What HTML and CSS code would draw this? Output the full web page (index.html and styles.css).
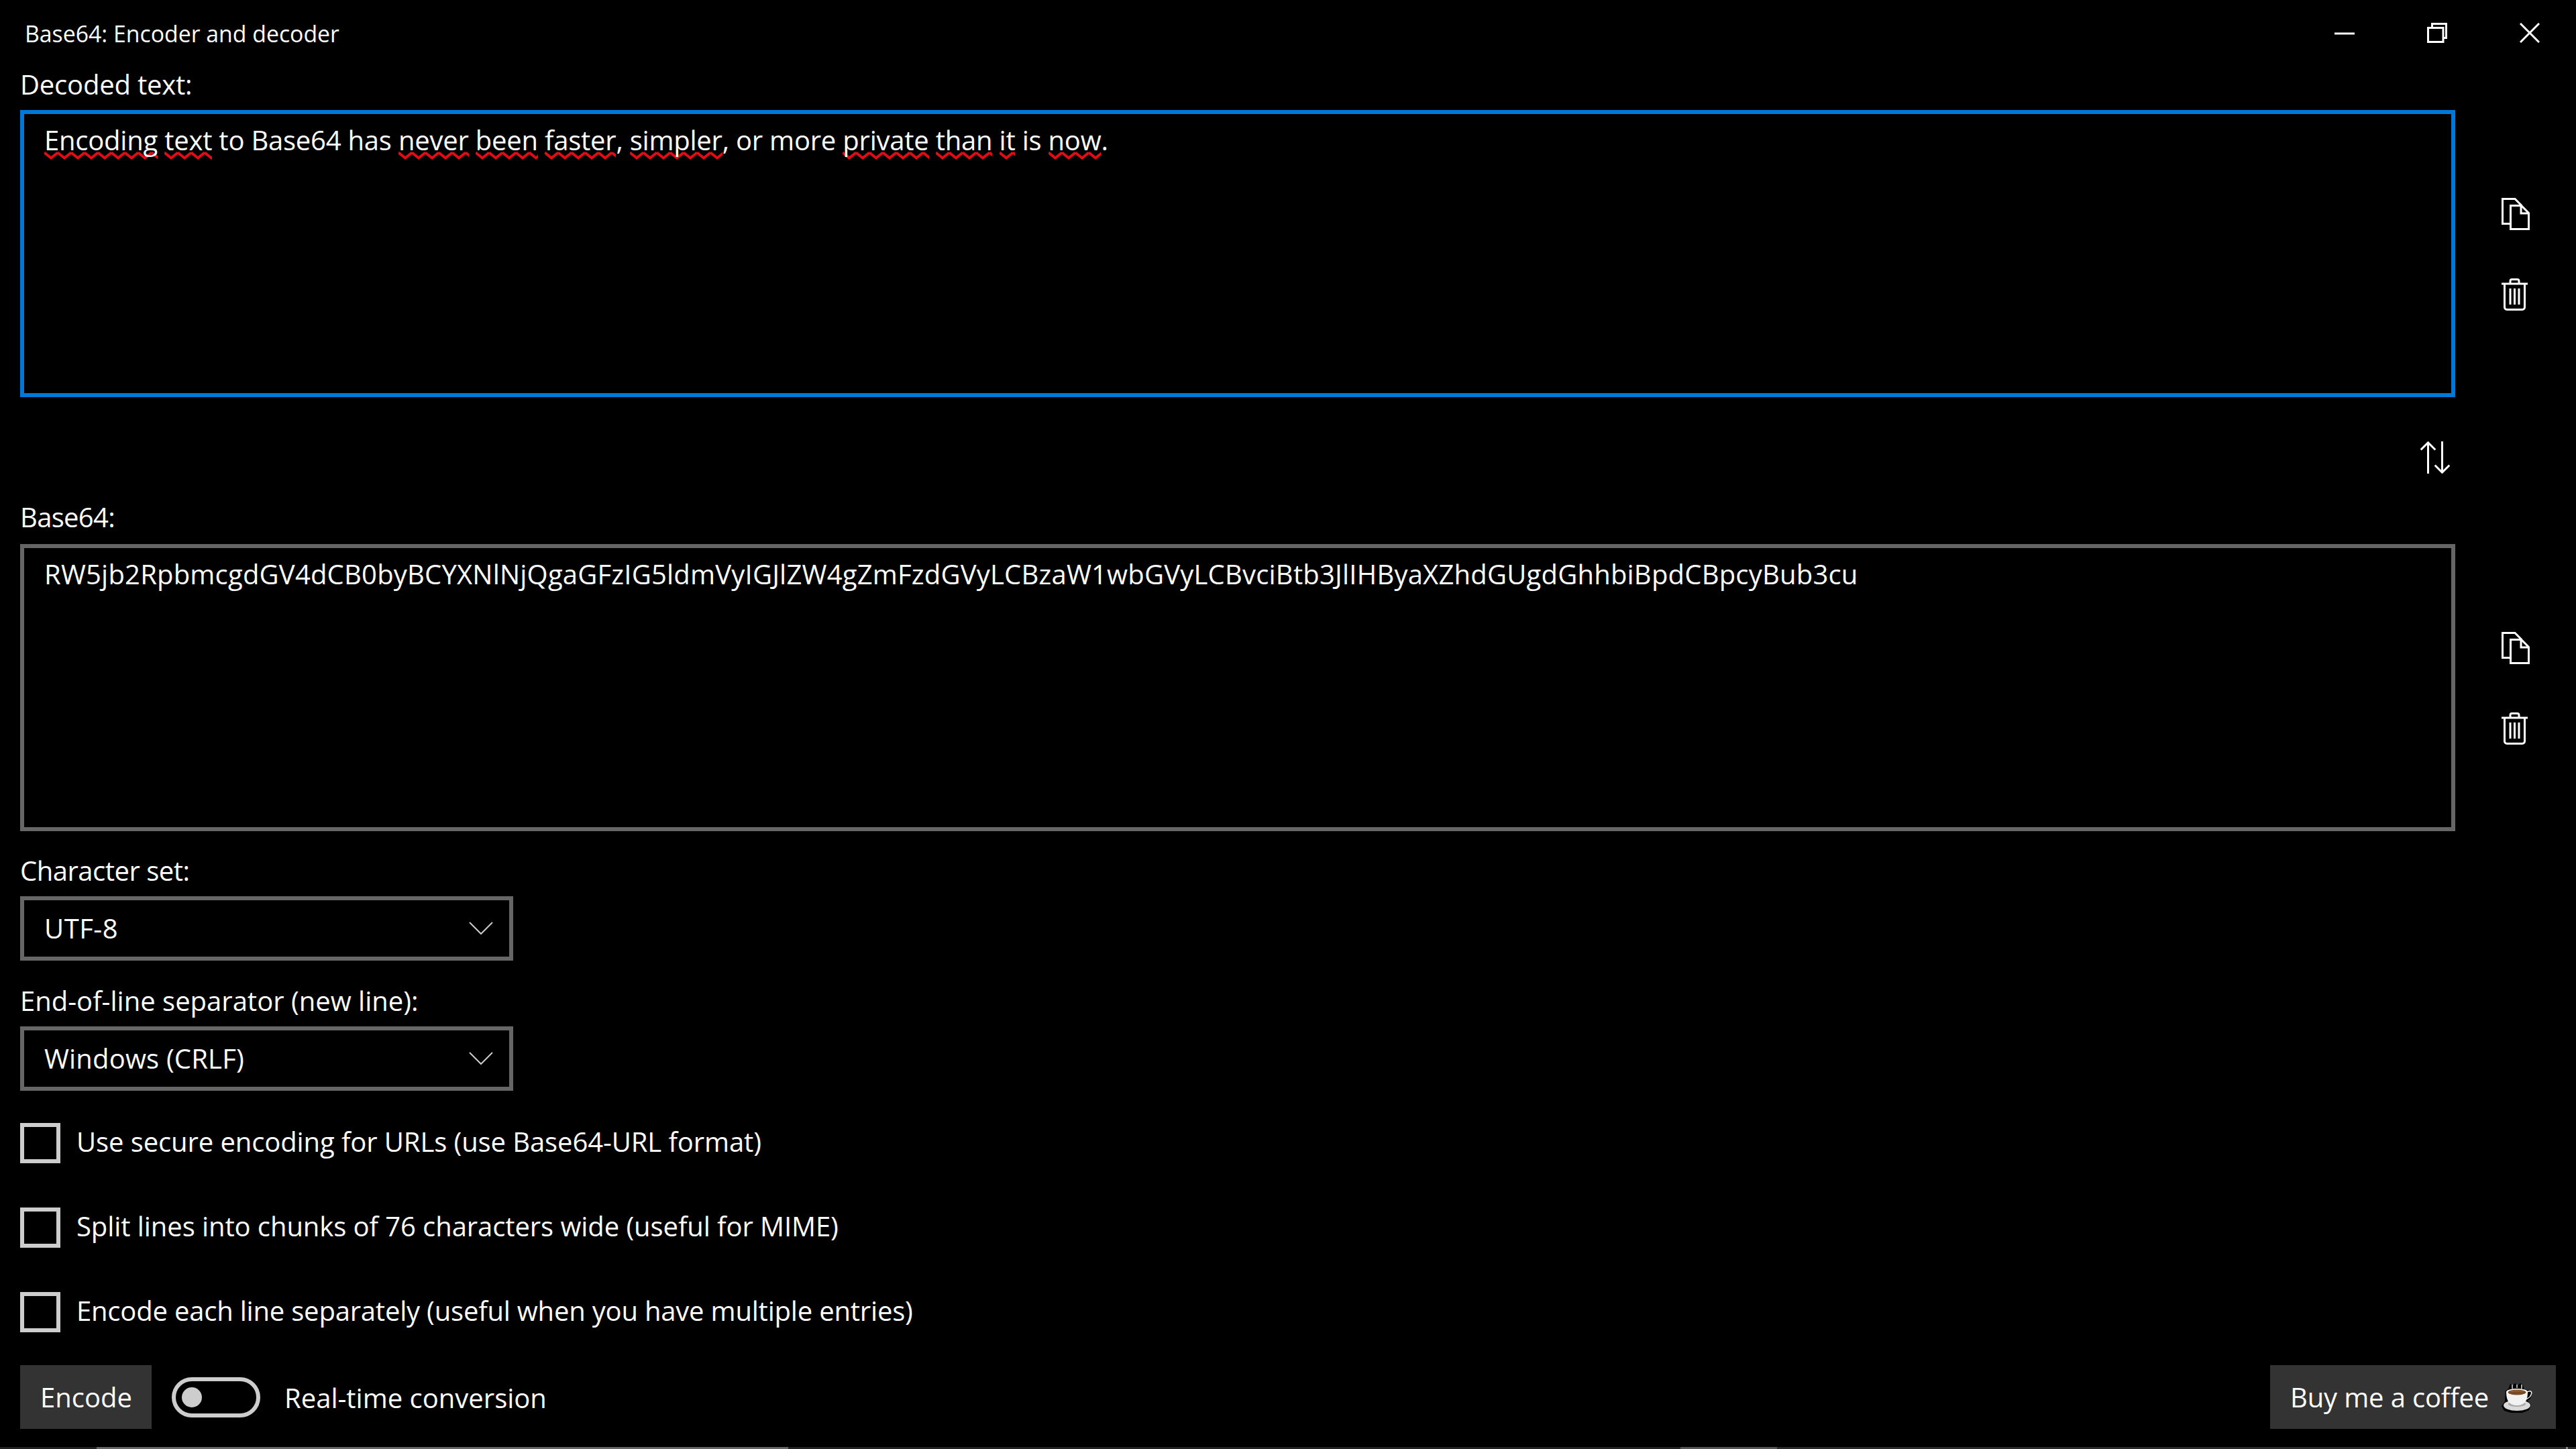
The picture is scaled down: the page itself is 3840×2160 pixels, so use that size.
FILE: index.html
```html
<!DOCTYPE html>
<html lang="en">
<head>
<meta charset="utf-8">
<title>Base64: Encoder and decoder</title>
<link rel="stylesheet" href="styles.css">
</head>
<body>
<div class="app">
  <header class="titlebar">
    <span class="title">Base64: Encoder and decoder</span>
    <div class="winctl">
      <svg class="wi wi-min" width="30" height="30" viewBox="0 0 30 30"><path d="M0 16h30" stroke="#fff" stroke-width="3" fill="none"/></svg>
      <svg class="wi wi-max" width="30" height="30" viewBox="0 0 30 30"><path d="M1.500 7.500h22.500v21h-22.500zM7.500 7.500v-6h21v21h-4.500" stroke="#fff" stroke-width="3" fill="none"/></svg>
      <svg class="wi wi-close" width="30" height="30" viewBox="0 0 30 30"><path d="M1 1l28 28M29 1L1 29" stroke="#fff" stroke-width="3" fill="none"/></svg>
    </div>
  </header>

  <main class="content">
    <div class="label lbl-decoded">Decoded text:</div>
    <div class="field-row">
      <div class="box box-focus">
        <div class="box-text t-decoded"><span class="sp">Encoding</span> <span class="sp">text</span> to Base64 has <span class="sp">never</span> <span class="sp">been</span> <span class="sp">faster</span>, <span class="sp">simpler</span>, or more <span class="sp">private</span> <span class="sp">than</span> <span class="sp">it</span> is <span class="sp">now</span>.</div>
      </div>
      <div class="side">
        <svg class="ic-copy" width="42" height="48" viewBox="0 0 42 48"><g stroke="#fff" stroke-width="3" fill="none"><path d="M12 38.500H1.500V1.500H20l10 10"/><path d="M13.500 11.500h16l11 11v24h-27zM29 12v11h11.500"/></g></svg>
        <svg class="ic-trash" width="39" height="48" viewBox="0 0 39 48"><g stroke="#fff" stroke-width="3" fill="none"><path d="M0 8h39M4.500 8v35c0 2 1.500 3.500 3.500 3.500h23c2 0 3.500-1.500 3.500-3.500V8M13 8V4c0-1.500 1-2.500 2.500-2.500h8C25 1.500 26 2.500 26 4v4M13 15v24M19.500 15v24M26 15v24"/></g></svg>
      </div>
    </div>

    <div class="swap-row">
      <svg class="ic-swap" width="44" height="48" viewBox="0 0 44 48"><g stroke="#fff" stroke-width="3" fill="none"><path d="M11.500 48V1.500M0.700 12.500L11.500 1.700L22.300 12.500"/><path d="M32.500 0V46.500M21.700 35.500L32.500 46.300L43.300 35.500"/></g></svg>
    </div>

    <div class="label lbl-base">Base64:</div>
    <div class="field-row">
      <div class="box box-plain">
        <div class="box-text t-base">RW5jb2RpbmcgdGV4dCB0byBCYXNlNjQgaGFzIG5ldmVyIGJlZW4gZmFzdGVyLCBzaW1wbGVyLCBvciBtb3JlIHByaXZhdGUgdGhhbiBpdCBpcyBub3cu</div>
      </div>
      <div class="side">
        <svg class="ic-copy" width="42" height="48" viewBox="0 0 42 48"><g stroke="#fff" stroke-width="3" fill="none"><path d="M12 38.500H1.500V1.500H20l10 10"/><path d="M13.500 11.500h16l11 11v24h-27zM29 12v11h11.500"/></g></svg>
        <svg class="ic-trash" width="39" height="48" viewBox="0 0 39 48"><g stroke="#fff" stroke-width="3" fill="none"><path d="M0 8h39M4.500 8v35c0 2 1.500 3.500 3.500 3.500h23c2 0 3.500-1.500 3.500-3.500V8M13 8V4c0-1.500 1-2.500 2.500-2.500h8C25 1.500 26 2.500 26 4v4M13 15v24M19.500 15v24M26 15v24"/></g></svg>
      </div>
    </div>

    <div class="label lbl-charset">Character set:</div>
    <div class="select">
      <span class="sel-utf">UTF-8</span>
      <svg width="36" height="20" viewBox="0 0 36 20"><path d="M1 1l17 17L35 1" stroke="#ccc" stroke-width="2" fill="none"/></svg>
    </div>

    <div class="label lbl-eol">End-of-line separator (new line):</div>
    <div class="select">
      <span class="sel-win">Windows (CRLF)</span>
      <svg width="36" height="20" viewBox="0 0 36 20"><path d="M1 1l17 17L35 1" stroke="#ccc" stroke-width="2" fill="none"/></svg>
    </div>

    <div class="checks">
      <div class="check"><span class="cb"></span><span class="ck-text c1">Use secure encoding for URLs (use Base64-URL format)</span></div>
      <div class="check"><span class="cb"></span><span class="ck-text c2">Split lines into chunks of 76 characters wide (useful for MIME)</span></div>
      <div class="check"><span class="cb"></span><span class="ck-text c3">Encode each line separately (useful when you have multiple entries)</span></div>
    </div>

    <div class="actions">
      <div class="btn btn-encode">Encode</div>
      <div class="toggle"><span class="thumb"></span></div>
      <span class="toggle-label">Real-time conversion</span>
      <div class="btn btn-coffee">
        <span class="coffee-text">Buy me a coffee</span>
        <svg class="coffee" width="48" height="46" viewBox="0 0 48 46">
          <path d="M14 3l4 2 3-3 4 3 4-3 4 3 2 8 6-1 5 4-2 9-4 3 5 6-3 8-10 4H15L5 43 1 36l5-7 1-16 4-2z" fill="#000"/>
          <ellipse cx="24" cy="35" rx="20" ry="8" fill="#d9d9d9"/>
          <ellipse cx="24" cy="33" rx="13" ry="4" fill="#aaa"/>
          <path d="M8 15c0 14 5 20 16 20s16-6 16-20z" fill="#f2f2f2"/>
          <ellipse cx="24" cy="15" rx="16" ry="5" fill="#fff"/>
          <ellipse cx="24" cy="15.500" rx="13.500" ry="4" fill="#7a4a22"/>
          <path d="M11.500 15.500c3-2 22-2 25 0-3-3-22-3-25 0z" fill="#b7834f"/>
          <path d="M39 15c6-3 8 0 6 4-1 3-5 6-8 7" stroke="#eee" stroke-width="1.500" fill="none"/>
          <path d="M17 4v6M24 4v5M31 4v6" stroke="#ddd" stroke-width="1.500" fill="none"/>
        </svg>
      </div>
    </div>
  </main>

  <footer class="strip">
    <span class="seg s1"></span><span class="seg s2"></span><span class="seg s3"></span><span class="seg s4"></span><span class="seg s5"></span><span class="seg s6"></span><span class="seg s7"></span>
  </footer>
</div>
</body>
</html>
```

FILE: styles.css
```css
* { box-sizing: border-box; }
html, body { margin: 0; padding: 0; background: #000; }
body { font-family: "Open Sans", "Noto Sans", sans-serif; color: #fff; font-size: 40px; font-weight: 400; }
.app { width: 3840px; height: 2160px; display: flex; flex-direction: column; overflow: hidden; }

.titlebar { height: 96px; flex: none; display: flex; align-items: center; justify-content: space-between; padding: 0 54px 0 37px; }
.title { font-size: 33.8px; line-height: 40px; margin-top: 4px; white-space: nowrap; }
.winctl { display: flex; gap: 108px; margin-top: 2px; }
.wi { display: block; }

.content { flex: 1; padding-left: 30px; padding-right: 30px; display: flex; flex-direction: column; }
.label { line-height: 52px; height: 52px; white-space: nowrap; }
.lbl-decoded { margin-top: 4px; margin-bottom: 12px; letter-spacing: -0.2px; }
.lbl-base { margin-bottom: 14px; letter-spacing: -0.7px; }
.lbl-charset { margin-top: 33px; margin-bottom: 12px; letter-spacing: -0.5px; }
.lbl-eol { margin-top: 34px; margin-bottom: 12px; }

.field-row { display: flex; flex: none; }
.box { width: 3630px; height: 428px; border: 6px solid #666; padding: 13px 30px; flex: none; }
.box-focus { border-color: #0078d7; }
.box-plain { border-color: #666; }
.box-text { line-height: 52px; white-space: nowrap; }
.t-decoded { letter-spacing: -0.225px; }
.t-base { letter-spacing: 0.2px; }
.sp {
  padding-bottom: 2px;
  background: url("data:image/svg+xml,%3Csvg xmlns='http://www.w3.org/2000/svg' width='20' height='13'%3E%3Cpath d='M0 2.500l10 8 10-8' stroke='%23e60a14' stroke-width='4' fill='none'/%3E%3C/svg%3E") repeat-x left bottom;
}

.side { width: 150px; flex: none; display: flex; flex-direction: column; align-items: flex-start; padding: 131px 0 0 69px; gap: 72px; }
.side svg { display: block; }

.swap-row { height: 153px; flex: none; width: 3622px; display: flex; justify-content: flex-end; padding-top: 66px; }
.ic-swap { display: block; }

.select { width: 735px; height: 96px; flex: none; border: 6px solid #666; padding: 0 24px 0 30px; display: flex; align-items: center; justify-content: space-between; }
.sel-utf { letter-spacing: 0.5px; margin-bottom: 2px; }
.sel-win { letter-spacing: 0.17px; margin-bottom: 2px; }

.checks { margin-top: 48px; display: flex; flex-direction: column; gap: 66px; flex: none; }
.check { display: flex; align-items: center; height: 60px; gap: 24px; white-space: nowrap; }
.cb { width: 60px; height: 60px; border: 6px solid #cdcdcd; flex: none; }
.ck-text { margin-bottom: 6px; }
.c1 { letter-spacing: -0.1px; }
.c2 { letter-spacing: -0.08px; }
.c3 { letter-spacing: -0.2px; }

.actions { display: flex; align-items: center; margin-top: 49px; height: 95px; flex: none; }
.btn { background: #333; height: 95px; display: flex; align-items: center; white-space: nowrap; flex: none; }
.btn-encode { width: 196px; padding-left: 30px; }
.toggle { width: 132px; height: 60px; margin-left: 30px; border: 6px solid #cdcdcd; border-radius: 30px; flex: none; padding: 9px; }
.thumb { display: block; width: 30px; height: 30px; border-radius: 50%; background: #cdcdcd; }
.toggle-label { margin-left: 36px; margin-top: 2px; white-space: nowrap; }
.btn-coffee { margin-left: auto; width: 426px; padding-left: 30px; gap: 18px; }
.coffee-text { letter-spacing: -0.15px; }
.coffee { display: block; flex: none; }

.strip { height: 3px; flex: none; display: flex; }
.seg { display: block; height: 3px; flex: none; }
.s1 { width: 144px; background: #222; }
.s2 { width: 1031px; background: #666; }
.s3 { width: 1330px; background: #222; }
.s4 { width: 144px; background: #555; }
.s5 { width: 1176px; background: #2a2a2a; }
.s6 { width: 3px; background: #888; }
.s7 { width: 12px; background: #2a2a2a; }
```
